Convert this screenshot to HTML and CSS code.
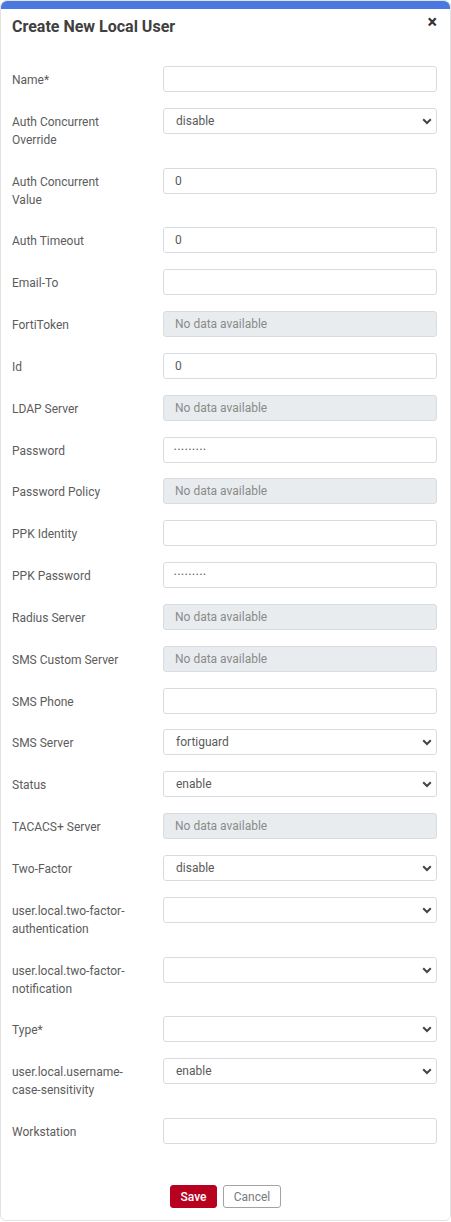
FILE: index.html
```html
<!DOCTYPE html>
<html>
<head>
<meta charset="utf-8">
<link rel="stylesheet" href="styles.css">
</head>
<body>
<div class="dialog">
  <div class="topbar"></div>
  <div class="header">
    <h1 class="title">Create New Local User</h1>
    <span class="close">&#215;</span>
  </div>
  <form class="form">
    <label class="lbl">Name*</label>
    <input class="ctl" type="text" value="">

    <label class="lbl">Auth Concurrent Override</label>
    <div class="sel"><select class="ctl"><option>disable</option></select><svg class="chev" viewBox="0 0 10 7"><path d="M1.2 1.3 L5 5 L8.8 1.3" /></svg></div>

    <label class="lbl">Auth Concurrent Value</label>
    <input class="ctl" type="text" value="0">

    <label class="lbl">Auth Timeout</label>
    <input class="ctl" type="text" value="0">

    <label class="lbl">Email-To</label>
    <input class="ctl" type="text" value="">

    <label class="lbl">FortiToken</label>
    <input class="ctl dis" type="text" value="No data available" disabled>

    <label class="lbl">Id</label>
    <input class="ctl" type="text" value="0">

    <label class="lbl">LDAP Server</label>
    <input class="ctl dis" type="text" value="No data available" disabled>

    <label class="lbl">Password</label>
    <input class="ctl pw" type="password" value="123456789">

    <label class="lbl">Password Policy</label>
    <input class="ctl dis" type="text" value="No data available" disabled>

    <label class="lbl">PPK Identity</label>
    <input class="ctl" type="text" value="">

    <label class="lbl">PPK Password</label>
    <input class="ctl pw" type="password" value="123456789">

    <label class="lbl">Radius Server</label>
    <input class="ctl dis" type="text" value="No data available" disabled>

    <label class="lbl">SMS Custom Server</label>
    <input class="ctl dis" type="text" value="No data available" disabled>

    <label class="lbl">SMS Phone</label>
    <input class="ctl" type="text" value="">

    <label class="lbl">SMS Server</label>
    <div class="sel"><select class="ctl"><option>fortiguard</option></select><svg class="chev" viewBox="0 0 10 7"><path d="M1.2 1.3 L5 5 L8.8 1.3" /></svg></div>

    <label class="lbl">Status</label>
    <div class="sel"><select class="ctl"><option>enable</option></select><svg class="chev" viewBox="0 0 10 7"><path d="M1.2 1.3 L5 5 L8.8 1.3" /></svg></div>

    <label class="lbl">TACACS+ Server</label>
    <input class="ctl dis" type="text" value="No data available" disabled>

    <label class="lbl">Two-Factor</label>
    <div class="sel"><select class="ctl"><option>disable</option></select><svg class="chev" viewBox="0 0 10 7"><path d="M1.2 1.3 L5 5 L8.8 1.3" /></svg></div>

    <label class="lbl">user.local.two-factor-authentication</label>
    <div class="sel"><select class="ctl"><option></option></select><svg class="chev" viewBox="0 0 10 7"><path d="M1.2 1.3 L5 5 L8.8 1.3" /></svg></div>

    <label class="lbl">user.local.two-factor-notification</label>
    <div class="sel"><select class="ctl"><option></option></select><svg class="chev" viewBox="0 0 10 7"><path d="M1.2 1.3 L5 5 L8.8 1.3" /></svg></div>

    <label class="lbl">Type*</label>
    <div class="sel"><select class="ctl"><option></option></select><svg class="chev" viewBox="0 0 10 7"><path d="M1.2 1.3 L5 5 L8.8 1.3" /></svg></div>

    <label class="lbl">user.local.username-case-sensitivity</label>
    <div class="sel"><select class="ctl"><option>enable</option></select><svg class="chev" viewBox="0 0 10 7"><path d="M1.2 1.3 L5 5 L8.8 1.3" /></svg></div>

    <label class="lbl">Workstation</label>
    <input class="ctl" type="text" value="">
  </form>
  <div class="footer">
    <button class="btn save" type="button">Save</button>
    <button class="btn cancel" type="button">Cancel</button>
  </div>
</div>
</body>
</html>
```

FILE: styles.css
```css
* { box-sizing: border-box; }
html, body { margin: 0; padding: 0; background: #ffffff; }
body { font-family: Roboto, "Liberation Sans", sans-serif; }

.dialog {
  width: 451px;
  border: 1px solid #e2e2e2;
  border-radius: 6px;
  overflow: hidden;
  background: #fff;
  padding-bottom: 12px;
}
.topbar {
  height: 8px;
  background: #4878e0;
  border-radius: 6px 6px 0 0;
}
.header {
  display: flex;
  justify-content: space-between;
  align-items: flex-start;
  padding: 8px 12px 0 11px;
}
.title {
  margin: 0;
  font-size: 16px;
  line-height: 20px;
  font-weight: 700;
  color: #404040;
}
.close {
  font-size: 18px;
  line-height: 10px;
  font-weight: 700;
  color: #333;
  padding-top: 0;
  margin-right: 1px;
}
.form {
  display: grid;
  grid-template-columns: 151px 274px;
  row-gap: 15.83px;
  padding: 29px 12px 0 11px;
  align-items: start;
}
.lbl {
  font-size: 12px;
  line-height: 18px;
  color: #5c5c5c;
  padding: 5px 33px 3px 0;
}
.ctl {
  display: block;
  width: 274px;
  height: 26px;
  margin: 0;
  border: 1px solid #d8dce2;
  border-radius: 3px;
  background: #fff;
  font-family: Roboto, "Liberation Sans", sans-serif;
  font-size: 12px;
  color: #5a5a5a;
  padding: 0 11px;
  outline: none;
}
.ctl.dis {
  background: #e9ecef;
  color: #8a8a8a;
  -webkit-text-fill-color: #8a8a8a;
  opacity: 1;
}
.ctl.pw {
  font-size: 7px;
  letter-spacing: 1.3px;
  color: #555;
  padding-left: 10px;
}
.sel { position: relative; width: 274px; }
.sel select.ctl {
  -webkit-appearance: none;
  appearance: none;
  padding: 0 12px;
}
.chev {
  position: absolute;
  right: 5px;
  top: 10px;
  width: 10px;
  height: 7px;
  fill: none;
  stroke: #444;
  stroke-width: 2;
  pointer-events: none;
}
.footer {
  display: flex;
  justify-content: center;
  gap: 6px;
  padding-top: 41px;
}
.btn {
  height: 23px;
  border-radius: 3px;
  font-family: Roboto, "Liberation Sans", sans-serif;
  font-size: 12px;
  padding: 0;
}
.save {
  width: 47px;
  background: #b8001f;
  border: 1px solid #b8001f;
  color: #fff;
  font-weight: 500;
}
.cancel {
  width: 58px;
  background: #fff;
  border: 1px solid #a3a3a3;
  color: #7a7a7a;
}
```
